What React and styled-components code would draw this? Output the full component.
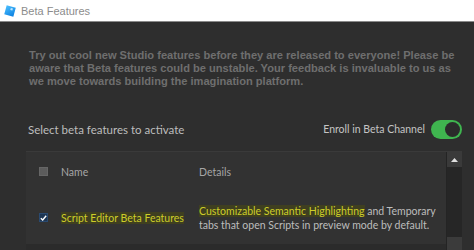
import React from "react";
import styled, { createGlobalStyle } from "styled-components";

const Global = createGlobalStyle`
  html, body { margin: 0; padding: 0; background: #2e2e2e; }
  body { width: 474px; height: 250px; overflow: hidden; }
`;

const Window = styled.div`
  width: 474px;
  height: 250px;
  display: flex;
  flex-direction: column;
  background: #2e2e2e;
  overflow: hidden;
`;

const TitleBar = styled.div`
  height: 21px;
  flex: none;
  background: #ffffff;
  border-bottom: 1px solid #8a8a8a;
  display: flex;
  align-items: center;
  gap: 5px;
  padding-left: 4px;
  font-family: "Liberation Sans", Arial, sans-serif;
  font-size: 11px;
  color: #8c8c8c;
`;

const Content = styled.div`
  flex: 1;
  display: flex;
  flex-direction: column;
  padding: 27px 12px 0 26px;
  min-height: 0;
`;

const Intro = styled.p`
  margin: 0 0 0 3px;
  font-family: "Liberation Sans", Arial, sans-serif;
  font-weight: bold;
  font-size: 11.1px;
  line-height: 13px;
  color: #6e6e6e;
  white-space: nowrap;
`;

const HeadRow = styled.div`
  margin-top: 31px;
  height: 20px;
  display: flex;
  align-items: center;
  justify-content: space-between;
  padding-left: 2px;
`;

const Heading = styled.div`
  font-family: Lato, "Open Sans", sans-serif;
  font-size: 11.5px;
  color: #bdbdbd;
`;

const EnrollGroup = styled.div`
  display: flex;
  align-items: center;
  gap: 6px;
`;

const EnrollLabel = styled.span`
  font-family: Lato, "Open Sans", sans-serif;
  font-size: 10.5px;
  color: #c4c4c4;
`;

const Toggle = styled.div`
  width: 31px;
  height: 19px;
  border-radius: 10px;
  background: #3fb54f;
  display: flex;
  align-items: center;
  justify-content: ${(p) => (p.$on ? "flex-end" : "flex-start")};
  padding: 0 2px;
  box-sizing: border-box;
`;

const Knob = styled.div`
  width: 15px;
  height: 15px;
  border-radius: 50%;
  background: #2b2b2b;
`;

const Panel = styled.div`
  margin-top: 12px;
  flex: 1;
  display: flex;
  background: #2b2b2b;
  border-top: 1px solid #3a3a3a;
  min-height: 0;
`;

const Table = styled.div`
  flex: 1;
  display: flex;
  flex-direction: column;
  align-self: flex-start;
`;

const Row = styled.div`
  display: grid;
  grid-template-columns: 22px 138px 1fr;
  align-items: center;
  height: ${(p) => p.$h}px;
  background: #323232;
  padding-left: 13px;
  font-family: Lato, "Open Sans", sans-serif;
  font-size: 10.5px;
  color: ${(p) => (p.$header ? "#a6a6a6" : "#bdbdbd")};
`;

const Box = styled.div`
  width: 7px;
  height: 7px;
  background: ${(p) => (p.$checked ? "#1d3552" : "#5c5c5c")};
  border: 1px solid ${(p) => (p.$checked ? "#2a4a70" : "#666")};
  display: flex;
  align-items: center;
  justify-content: center;
`;

const Mark = styled.span`
  background: #3f3f20;
  color: #cdcd28;
`;

const Details = styled.div`
  display: flex;
  flex-direction: column;
  line-height: 14px;
  white-space: nowrap;
`;

const Scrollbar = styled.div`
  width: 15px;
  flex: none;
  display: flex;
  flex-direction: column;
  background: #262626;
  border-left: 1px solid #242424;
`;

const ArrowBtn = styled.div`
  height: 15px;
  background: #3a3a3a;
  display: flex;
  align-items: center;
  justify-content: center;
`;

const Track = styled.div`
  height: 70px;
  background: #262626;
`;

const Thumb = styled.div`
  flex: 1;
  background: #3b3b3b;
`;

function Logo() {
  return (
    <svg width="12" height="12" viewBox="0 0 12 12">
      <defs>
        <linearGradient id="lg" x1="0" y1="0" x2="1" y2="1">
          <stop offset="0" stopColor="#4cc0ff" />
          <stop offset="1" stopColor="#0a7ee0" />
        </linearGradient>
      </defs>
      <g transform="rotate(15 6 6)">
        <rect x="1.3" y="1.3" width="9.4" height="9.4" fill="url(#lg)" />
        <rect x="6" y="2.8" width="2.2" height="2.2" fill="#bfe6ff" />
      </g>
    </svg>
  );
}

export default function App() {
  return (
    <Window>
      <Global />
      <TitleBar>
        <Logo />
        Beta Features
      </TitleBar>
      <Content>
        <Intro>
          Try out cool new Studio features before they are released to everyone! Please be
          <br />
          aware that Beta features could be unstable. Your feedback is invaluable to us as
          <br />
          we move towards building the imagination platform.
        </Intro>
        <HeadRow>
          <Heading>Select beta features to activate</Heading>
          <EnrollGroup>
            <EnrollLabel>Enroll in Beta Channel</EnrollLabel>
            <Toggle $on>
              <Knob />
            </Toggle>
          </EnrollGroup>
        </HeadRow>
        <Panel>
          <Table>
            <Row $header $h={39}>
              <Box />
              <span>Name</span>
              <span>Details</span>
            </Row>
            <Row $h={53}>
              <Box $checked>
                <svg width="7" height="6" viewBox="0 0 7 6">
                  <path d="M0.8 3.2 L2.7 5 L6.2 0.8" stroke="#fff" strokeWidth="1.4" fill="none" />
                </svg>
              </Box>
              <span>
                <Mark>Script Editor Beta Features</Mark>
              </span>
              <Details>
                <span>
                  <Mark>Customizable Semantic Highlighting</Mark> and Temporary
                </span>
                <span>tabs that open Scripts in preview mode by default.</span>
              </Details>
            </Row>
          </Table>
          <Scrollbar>
            <ArrowBtn>
              <svg width="7" height="4" viewBox="0 0 7 4">
                <path d="M0 4 L3.5 0 L7 4 Z" fill="#e0e0e0" />
              </svg>
            </ArrowBtn>
            <Track />
            <Thumb />
          </Scrollbar>
        </Panel>
      </Content>
    </Window>
  );
}
